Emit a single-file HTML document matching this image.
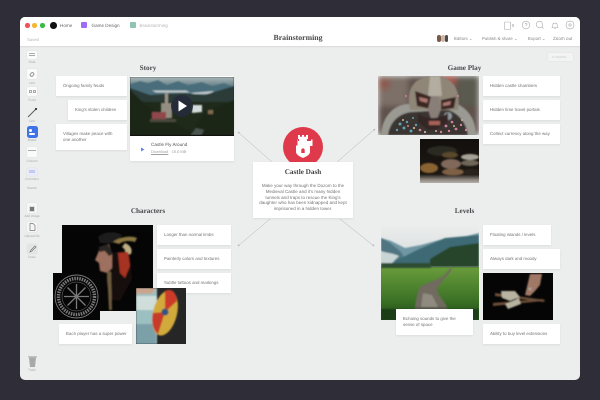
<!DOCTYPE html>
<html><head><meta charset="utf-8">
<style>
*{box-sizing:border-box;margin:0;padding:0}
html,body{width:600px;height:400px;overflow:hidden;background:#2f2e38;font-family:"Liberation Sans",sans-serif;text-rendering:geometricPrecision}
#win{position:absolute;left:20px;top:17px;width:560px;height:363px;background:#eceded;border-radius:5px;overflow:hidden}
.a{position:absolute}
.t{position:absolute;white-space:nowrap;color:#666;font-size:4.6px;line-height:6px}
.c{position:absolute;background:#fff;box-shadow:0 1px 2px rgba(0,0,0,.07);color:#757575;font-size:4.4px;line-height:6px;padding:0 7px;display:flex;align-items:center;white-space:nowrap}
.h{position:absolute;font-family:"Liberation Serif",serif;font-weight:bold;color:#4a4a4f;font-size:7.2px;line-height:9px;white-space:nowrap;transform:translateX(-50%)}
.l{position:absolute;font-size:3.2px;color:#aaa;white-space:nowrap;transform:translateX(-50%);line-height:4px}
.b{position:absolute;left:7px;width:10px;height:10px;border-radius:1.5px;background:#fbfbfb;box-shadow:0 0 1px rgba(0,0,0,.12)}
svg{position:absolute;display:block}
</style></head><body>
<div id="win">
<div class="a" style="left:0;top:0;width:560px;height:29px;background:#fff;box-shadow:0 1px 1px rgba(0,0,0,.08)"></div>
<div class="a" style="left:5px;top:6px;width:4.5px;height:4.5px;border-radius:50%;background:#f0525a"></div>
<div class="a" style="left:12px;top:6px;width:4.5px;height:4.5px;border-radius:50%;background:#f5b731"></div>
<div class="a" style="left:20px;top:6px;width:4.5px;height:4.5px;border-radius:50%;background:#37bb45"></div>
<div class="a" style="left:30px;top:5px;width:6.5px;height:6.5px;border-radius:50%;background:#111"></div>
<div class="t" style="left:40px;top:5.5px;color:#666">Home</div>
<div class="a" style="left:61px;top:5px;width:6px;height:6px;border-radius:1px;background:#a06cf5"></div>
<div class="t" style="left:71.5px;top:5.5px;color:#666">Game Design</div>
<div class="a" style="left:110px;top:5px;width:6px;height:6px;border-radius:1px;background:#8fc4b0"></div>
<div class="t" style="left:119.5px;top:5.5px;color:#b5b5b5">Brainstorming</div>
<div class="t" style="left:7px;top:19.5px;color:#b5b5b5;font-size:4.2px">Saved</div>
<div class="h" style="left:278px;top:15.5px;font-size:7.8px;color:#4a4a4a">Brainstorming</div>

<svg style="left:0;top:0" width="560" height="29" fill="none" stroke="#aaa" stroke-width=".6">
<rect x="484.5" y="5" width="6" height="7.5" rx=".8"/><circle cx="493" cy="8.5" r=".9"/>
<circle cx="506" cy="8" r="3.8"/><path d="M505 7c.3-1.200 2-1 2 0s-1 .8-1 1.800"/>
<circle cx="519.500" cy="7.500" r="3.300"/><path d="M522 10l1.500 1.500"/>
<path d="M532 10.500c1-1 .7-2.500 1-3.500.4-1.300 3.600-1.300 4 0 .3 1 0 2.500 1 3.500zM534 11.500h2"/>
<path d="M547 5l3-1 3 1 1 3-1 3-3 1-3-1-1-3z"/><circle cx="550" cy="8" r="1.200"/>
</svg>
<div class="a" style="left:417px;top:18px;width:4px;height:6.5px;border-radius:2px;background:#7a5a48"></div>
<div class="a" style="left:421px;top:18px;width:3.5px;height:6.5px;border-radius:2px;background:#cbb7a6"></div>
<div class="a" style="left:424.5px;top:18px;width:3.5px;height:6.5px;border-radius:2px;background:#4d4a4c"></div>
<div class="t" style="left:434px;top:18.5px;font-size:4.4px;color:#888">Editors ⌄</div>
<div class="t" style="left:462px;top:18.5px;font-size:4.4px;color:#888">Publish &amp; share ⌄</div>
<div class="t" style="left:508px;top:18.5px;font-size:4.4px;color:#888">Export ⌄</div>
<div class="t" style="left:533px;top:18.5px;font-size:4.6px;color:#888">Zoom out</div>
<div class="a" style="left:528px;top:36px;width:25px;height:8px;border-radius:1px;background:#f3f3f3;box-shadow:0 0 1px rgba(0,0,0,.12)"></div>
<div class="t" style="left:532px;top:37px;font-size:3px;color:#c5c5c5">≡ Unscribe</div>

<!-- toolbar -->
<div class="b" style="top:33.5px;height:8px"></div><div class="a" style="left:9px;top:36px;width:6px;height:1px;background:#aaa"></div><div class="a" style="left:9px;top:38px;width:6px;height:1px;background:#aaa"></div>
<div class="l" style="left:12px;top:43px">Note</div>
<div class="b" style="top:52px"></div><div class="a" style="left:10px;top:55px;width:4px;height:5px;border:.7px solid #999;border-radius:2px;transform:rotate(45deg)"></div>
<div class="l" style="left:12px;top:64px">Link</div>
<div class="b" style="top:70px;height:9px"></div><div class="a" style="left:8.5px;top:73px;width:3px;height:3px;border:.5px solid #aaa"></div><div class="a" style="left:13px;top:73px;width:3px;height:3px;border:.5px solid #aaa"></div>
<div class="l" style="left:12px;top:81px">To-do</div>
<svg style="left:6px;top:90px" width="12" height="11"><path d="M2 10L10 2" stroke="#555" stroke-width=".9"/><circle cx="10" cy="2" r="1.100" fill="#333"/></svg>
<div class="l" style="left:12px;top:101.500px">Line</div>
<div class="a" style="left:7px;top:109px;width:10.500px;height:11.500px;border-radius:2.500px;background:#3f73e8"></div>
<div class="a" style="left:9px;top:112px;width:3px;height:3px;border-radius:50%;background:#fff"></div><div class="a" style="left:9px;top:116px;width:6px;height:2px;border-radius:1px;background:#fff"></div>
<div class="l" style="left:12px;top:121px">Board</div>
<div class="b" style="top:130px"></div><div class="a" style="left:8px;top:133px;width:8px;height:.6px;background:#aaa"></div>
<div class="l" style="left:12px;top:142px">Column</div>
<div class="b" style="top:151px;height:8px;background:#e9ebf8"></div><div class="a" style="left:9px;top:153px;width:6px;height:3px;background:#c3ccf0"></div>
<div class="l" style="left:12px;top:160px">Comment</div>
<div class="l" style="left:12px;top:169px">Sketch</div>
<div class="b" style="top:186px;background:#f6f6f6"></div><div class="a" style="left:9px;top:188.500px;width:6px;height:6px;background:#777;border:.7px solid #ddd"></div>
<div class="l" style="left:12px;top:197px">Add image</div>
<div class="b" style="top:205px;background:#f6f6f6"></div><svg style="left:8.500px;top:206px" width="7" height="8" fill="none" stroke="#777" stroke-width=".7"><path d="M1 .5h3l2 2v5H1z"/></svg>
<div class="l" style="left:12px;top:217px">Upload file</div>
<div class="b" style="top:226.500px;background:#e4e4e4"></div><svg style="left:8.500px;top:228px" width="8" height="8" fill="none" stroke="#777" stroke-width=".7"><path d="M1 7l1-2 4-4 1 1-4 4z"/></svg>
<div class="l" style="left:12px;top:238px">Draw</div>
<svg style="left:7.500px;top:339px" width="9" height="11"><path d="M0 0h9v1.500H0z" fill="#c0c0c0"/><path d="M1 1.500h7L7 11H2z" fill="#a8a8a8"/></svg>
<div class="l" style="left:12px;top:351px">Trash</div>

<!-- connectors -->
<svg style="left:0;top:0" width="560" height="363" fill="none" stroke="#b4b4b4" stroke-width=".5">
<path d="M218 115L252 145M218 115l2 .4M218 115l.4 2"/>
<path d="M317 145L355 112M355 112l-2 .4M355 112l-.4 2"/>
<path d="M250 202L218 229M218 229l2-.3M218 229l.3-2"/>
<path d="M320 202L354 229M354 229l-2-.3M354 229l-.3-2"/>
</svg>

<!-- story -->
<div class="h" style="left:128px;top:46.500px">Story</div>
<div class="c" style="left:36px;top:59px;width:71px;height:20px">Ongoing family feuds</div>
<div class="c" style="left:48px;top:83px;width:59px;height:20px">King's stolen children</div>
<div class="c" style="left:36px;top:107px;width:71px;height:25.500px">Villages make peace with<br>one another</div>
<div class="c" style="left:110px;top:59px;width:104px;height:85px;padding:0"></div>
<svg style="left:110px;top:59.500px" width="104" height="59" viewBox="0 0 104 59">
<defs><filter id="f1"><feGaussianBlur stdDeviation=".8"/></filter><linearGradient id="sky" x1="0" y1="0" x2="0" y2="1"><stop offset="0" stop-color="#aab8bb"/><stop offset="1" stop-color="#47676f"/></linearGradient></defs>
<rect width="104" height="59" fill="#1f2a1b"/>
<g filter="url(#f1)">
<rect width="104" height="13" fill="url(#sky)"/>
<path d="M0 7l10-3 8 2 10-3 9 5 11-4 10 4 14-3 10 4 12-3 10 4v10H0z" fill="#4a6d7a"/>
<path d="M22 13.500h34l4 2H26zM60 16l24-2-4 3H64z" fill="#bfcbcd"/>
<path d="M0 11l20 7 34-2 20 2 30-9v16H0z" fill="#2a3a37"/>
<path d="M0 12c8 10 18 18 34 26l34 21H0z" fill="#1c2618"/>
<path d="M60 59l14-24 30-12v36z" fill="#1d2716"/>
<path d="M62 28h10v7l-10 1z" fill="#d6dcdb"/>
<rect x="31" y="26" width="11" height="15" fill="#948d81"/><rect x="35" y="16" width="3" height="11" fill="#9c9488"/>
<rect x="22" y="35" width="14" height="7" fill="#8f474b"/><rect x="20" y="42" width="26" height="3" fill="#4a4a3e"/>
<rect x="78" y="33" width="5" height="4" fill="#806a50"/>
<path d="M60 59l6-8 8 2-3 6z" fill="#4a5450"/>
</g>
<rect y="57.800" width="104" height="1.200" fill="#111"/>
<circle cx="52" cy="29" r="11" fill="#262b3a" opacity=".9"/><path d="M48.500 23.500v11l8.500-5.500z" fill="#fff"/>
</svg>
<svg style="left:118px;top:128px" width="9" height="9"><path d="M3 2.500v4l3.500-2z" fill="#5f88e6"/></svg>
<div class="t" style="left:131px;top:125px;color:#555;font-size:4.6px">Castle Fly Around</div>
<div class="t" style="left:131px;top:132px;font-size:3.9px;color:#a0a0a0"><u>Download</u> · 16.0 MB</div>

<!-- center -->
<svg style="left:263px;top:110px" width="40" height="40" viewBox="0 0 40 40">
<circle cx="20" cy="20" r="20" fill="#de3a4c"/>
<path d="M15 8h2v1.800h2V8h2v1.800h2V8h2v4h-1v2h4v-1.500h1.500V19h-15v-6.500H14V14h2v-2h-1z" fill="#fff"/>
<path d="M13 18.500h14v6.500c0 2.500-3.500 4.500-7 6-3.500-1.500-7-3.500-7-6z" fill="#fff"/>
<path d="M18.300 26v-3.500l1.700-1.500 1.700 1.500V26z" fill="#de3a4c"/>
</svg>
<div class="c" style="left:233px;top:145px;width:100px;height:56px;display:block;text-align:center;padding:0;font-size:4.5px;line-height:5.8px;color:#757575">
<div style="font-family:'Liberation Serif',serif;font-weight:bold;font-size:7.2px;color:#444;margin-top:6px;margin-bottom:6px;line-height:9px">Castle Dash</div>
Make your way through the Dozom to the<br>Medieval Castle and it's many hidden<br>tunnels and traps to rescue the King's<br>daughter who has been kidnapped and kept<br>imprisoned in a hidden tower.</div>

<!-- game play -->
<div class="h" style="left:444.500px;top:46.500px">Game Play</div>
<svg style="left:358px;top:59px" width="101" height="59" viewBox="0 0 101 59">
<defs><filter id="f2"><feGaussianBlur stdDeviation=".9"/></filter><filter id="f3"><feGaussianBlur stdDeviation="3"/></filter><filter id="f4"><feGaussianBlur stdDeviation=".35"/></filter><clipPath id="cp2"><rect width="101" height="59"/></clipPath></defs>
<g clip-path="url(#cp2)"><g filter="url(#f3)"><rect width="101" height="59" fill="#5f514c"/><rect width="30" height="30" fill="#7d6f68"/><rect x="80" width="21" height="30" fill="#5a5a50"/><circle cx="72" cy="5" r="6" fill="#a9584e"/><circle cx="6" cy="8" r="6" fill="#8d5a4e"/></g>
<g filter="url(#f2)">
<path d="M3 59C4 42 14 30 28 28l46-2c14 4 24 16 24 33z" fill="#9a9a93"/>
<path d="M10 59c2-14 12-22 24-23l36-2c10 3 18 12 20 25z" fill="#3a3433"/>
<path d="M32 34C28 14 34 1 56 0c20 1 27 14 24 34z" fill="#8f8678"/>
<path d="M52 0h10l2 20H50z" fill="#b3ada0"/>
<path d="M37 15l17 6-1 12-14-3z" fill="#3a2723"/><path d="M78 21l-15 3v10l13-2z" fill="#3a2723"/>
<path d="M41 21l9 2-1 4-7-2zM73 25l-8 2v3l7-1z" fill="#a9766e"/>
<path d="M53 20h7l3 13-4 10h-6l-3-10z" fill="#8a7f78"/><circle cx="70" cy="40" r="4" fill="#8f959a"/>
<path d="M40 36c4 8 26 8 30 0v10l-12 8H50l-10-8z" fill="#352825"/>
<rect x="51" y="45" width="11" height="4" fill="#a66258"/>
</g>
<g filter="url(#f4)">
<g fill="#5f9fb0"><circle cx="22" cy="48" r="1.500"/><circle cx="26" cy="52" r="1.500"/><circle cx="29" cy="46" r="1.200"/><circle cx="33" cy="55" r="1.500"/><circle cx="38" cy="49" r="1.200"/><circle cx="19" cy="54" r="1.200"/><circle cx="35" cy="42" r="1"/></g>
<g fill="#d2809f"><circle cx="42" cy="54" r="1.300"/><circle cx="30" cy="50" r="1"/><circle cx="68" cy="50" r="1.400"/><circle cx="74" cy="46" r="1.300"/><circle cx="78" cy="53" r="1.400"/><circle cx="83" cy="49" r="1.200"/><circle cx="71" cy="55" r="1.200"/><circle cx="88" cy="54" r="1.200"/><circle cx="63" cy="56" r="1.200"/><circle cx="80" cy="20" r="1"/><circle cx="28" cy="20" r="1"/></g>
<g fill="#c9b59a"><circle cx="25" cy="44" r="1"/><circle cx="36" cy="52" r="1.100"/><circle cx="47" cy="56" r="1.100"/><circle cx="76" cy="50" r="1"/><circle cx="84" cy="44" r="1"/><circle cx="58" cy="55" r="1"/></g>
</g></g>
</svg>
<svg style="left:400px;top:122px" width="59" height="44" viewBox="0 0 59 44">
<defs><linearGradient id="cg" x1="0" y1="0" x2="0" y2="1"><stop offset="0" stop-color="#120f0c"/><stop offset=".8" stop-color="#1e1813"/><stop offset=".92" stop-color="#8a847d"/><stop offset="1" stop-color="#b5b0aa"/></linearGradient></defs>
<rect width="59" height="44" fill="url(#cg)"/>
<g filter="url(#f2)">
<ellipse cx="22" cy="12" rx="15" ry="5" fill="#2c2a24"/><ellipse cx="30" cy="16" rx="8" ry="3" fill="#5a4a2c"/>
<ellipse cx="9" cy="29" rx="9" ry="5" fill="#8a6430"/><ellipse cx="31" cy="25" rx="10" ry="5" fill="#80685a"/>
<ellipse cx="50" cy="18" rx="9" ry="3" fill="#a8a399"/><ellipse cx="50" cy="24" rx="9" ry="3" fill="#6e6658"/>
<ellipse cx="33" cy="33" rx="11" ry="3.500" fill="#7d6044"/><ellipse cx="51" cy="33" rx="8" ry="3" fill="#2c241c"/>
</g></svg>
<div class="c" style="left:463px;top:59px;width:77px;height:20px">Hidden castle chambers</div>
<div class="c" style="left:463px;top:83px;width:77px;height:20px">Hidden time travel portals</div>
<div class="c" style="left:463px;top:107px;width:77px;height:20px">Collect currency along the way</div>

<!-- characters -->
<div class="h" style="left:128px;top:190px">Characters</div>
<svg style="left:42px;top:208px" width="91" height="86" viewBox="0 0 91 86">
<rect width="91" height="86" fill="#050505"/>
<g filter="url(#f2)">
<path d="M48 30c4-4 16-6 20-2l2 26-12 22-10-2-4-20z" fill="#141010"/>
<path d="M36 12c6-6 18-6 24-2l-6 8H38z" fill="#1c1c1c"/>
<path d="M51 17c6-5 18-7 24-4l-2 4c-6-2-12-1-16 2z" fill="#8a7640"/>
<path d="M63 18c5 2 8 6 6 11l-5 0c0-3-2-6-4-7z" fill="#bcae82"/>
<path d="M38 22l9-3 3 10 0 14-5 5-7-2-1-8-4-3 3-7z" fill="#9d6f5e"/>
<path d="M37 22l9-3 5 10-4 2-4-5-6 1z" fill="#2a2522"/>
<path d="M56 28l10-1 2 14-5 12-5-5z" fill="#a63221"/>
<path d="M45 46l4 1 1 38h-3z" fill="#6d5b3c"/></g></svg>
<svg style="left:33px;top:256px" width="47" height="47" viewBox="0 0 47 47">
<rect width="47" height="47" fill="#060606"/>
<g fill="none" stroke="#7a7a7a"><circle cx="23.500" cy="23.500" r="21.500" stroke-width=".9"/><circle cx="23.500" cy="23.500" r="18" stroke-width="3.500" stroke-dasharray="1.500 1"/><circle cx="23.500" cy="23.500" r="14.500" stroke-width=".5"/>
<path d="M23.500 11v25M11 23.500h25M14.500 14.500l18 18M32.500 14.500l-18 18" stroke-width="1.300"/></g></svg>
<div class="c" style="left:137px;top:208px;width:74px;height:20px">Longer than normal limbs</div>
<div class="c" style="left:137px;top:232px;width:74px;height:20px">Painterly colors and textures</div>
<div class="c" style="left:137px;top:256px;width:74px;height:20px">Subtle tattoos and markings</div>
<svg style="left:116px;top:271px" width="50" height="56" viewBox="0 0 50 56">
<rect width="50" height="56" fill="#262626"/>
<g filter="url(#f2)"><rect width="21" height="56" fill="#9cc0c2"/><path d="M0 0h20L16 6H0z" fill="#c9a58f"/>
<rect y="8" width="21" height="14" fill="#cfdedb"/><rect y="36" width="20" height="20" fill="#7ba0a8"/>
<ellipse cx="29" cy="25" rx="12" ry="23" fill="#d2aa3a" transform="rotate(14 29 25)"/>
<path d="M29 3c7-3 11 1 12 10L29 24z" fill="#cc3a2a"/><path d="M17 25l12-1-7 22c-5-4-7-13-5-21z" fill="#c73b2a"/>
<circle cx="29" cy="24" r="3.500" fill="#33547e"/></g></svg>
<div class="c" style="left:39px;top:307px;width:73px;height:20px">Each player has a super power</div>

<!-- levels -->
<div class="h" style="left:444.500px;top:190px">Levels</div>
<svg style="left:361px;top:208px" width="98" height="95" viewBox="0 0 98 95">
<defs><linearGradient id="sk2" x1="0" y1="0" x2="0" y2="1"><stop offset="0" stop-color="#eceded"/><stop offset="1" stop-color="#d3dada"/></linearGradient><linearGradient id="gr" x1="0" y1="0" x2="0" y2="1"><stop offset="0" stop-color="#6a9c3c"/><stop offset=".6" stop-color="#3d7426"/><stop offset="1" stop-color="#1f4a18"/></linearGradient></defs>
<rect width="98" height="42" fill="url(#sk2)"/><rect y="42" width="98" height="53" fill="url(#gr)"/>
<g filter="url(#f2)">
<path d="M0 13l10 3 14 7 16-3 22-6 20-2 16-4v32H0z" fill="#6f96a2"/>
<path d="M0 13l8 4 12 10 8 15H0z" fill="#4f7583"/>
<path d="M14 36l24-12 26-11 34-3v32H14z" fill="#3d6a74"/><path d="M0 26c5 2 12 2 18 5l-8 8H0z" fill="#c9d4d4"/>
<path d="M49 34l20-12 29-4v24H49z" fill="#27452a"/>
<rect y="38" width="50" height="5" fill="#2d4d30"/>
<path d="M69 43c-3 5-6 8-10 10-7 4-15 5-20 9-3 6-4 13-5 20h32c-3-6-8-11-10-17 2-7 11-14 15-21z" fill="#6f6b5f"/>
<path d="M42 68l9 2 6 12H40z" fill="#8f8b80"/>
<rect y="84" width="98" height="11" fill="#1e3d14"/><path d="M34 82h32v13H34z" fill="#55554a"/></g></svg>
<div class="c" style="left:376px;top:291.500px;width:77px;height:26.500px">Echoing sounds to give the<br>sense of space</div>
<div class="c" style="left:463px;top:208px;width:68px;height:20px">Floating islands / levels</div>
<div class="c" style="left:463px;top:232px;width:77px;height:20px">Always dark and moody</div>
<svg style="left:463px;top:256px" width="70" height="47" viewBox="0 0 70 47">
<rect width="70" height="47" fill="#060505"/>
<g filter="url(#f2)">
<path d="M42 22L47 1h12l-2 11-5 6-5 5z" fill="#a07866"/><circle cx="47" cy="16" r="1.500" fill="#a5a5a0"/>
<path d="M12 20l50 7-1 2-49-6zM10 30l50-4v2l-50 5z" fill="#6d5037"/>
<path d="M18 18h14l5 6-10 4-8-3zM22 31l14-6 2 6-13 5z" fill="#b8b2a0"/></g></svg>
<div class="c" style="left:463px;top:307px;width:77px;height:20px">Ability to buy level extensions</div>
</div>
</body></html>
